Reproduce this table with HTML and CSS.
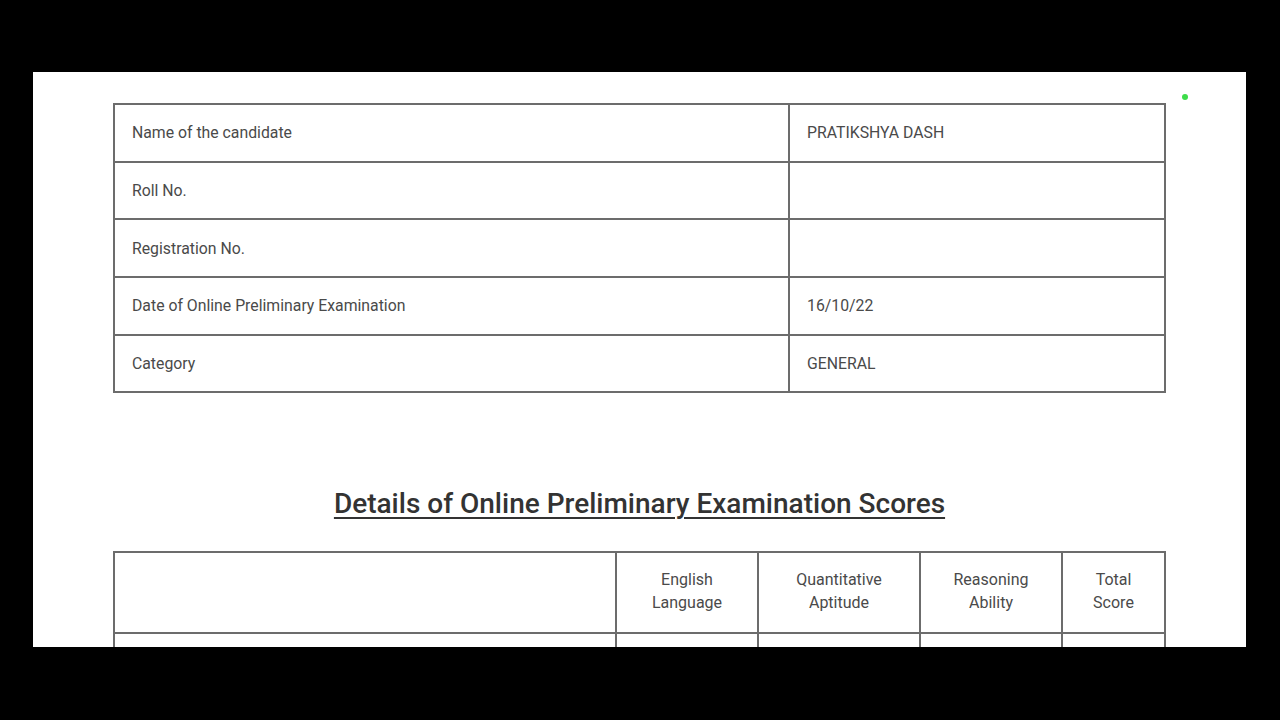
FILE: index.html
```html
<!DOCTYPE html>
<html>
<head>
<meta charset="utf-8">
<link rel="stylesheet" href="styles.css">
</head>
<body>
<div class="screen">
  <span class="dot"></span>
  <table class="info">
    <tr><td class="label">Name of the candidate</td><td class="value">PRATIKSHYA DASH</td></tr>
    <tr><td class="label">Roll No.</td><td class="value"></td></tr>
    <tr><td class="label">Registration No.</td><td class="value"></td></tr>
    <tr><td class="label">Date of Online Preliminary Examination</td><td class="value">16/10/22</td></tr>
    <tr><td class="label">Category</td><td class="value">GENERAL</td></tr>
  </table>
  <h2 class="title">Details of Online Preliminary Examination Scores</h2>
  <table class="scores">
    <tr class="head">
      <th class="c1"></th>
      <th class="c2">English<br>Language</th>
      <th class="c3">Quantitative<br>Aptitude</th>
      <th class="c4">Reasoning<br>Ability</th>
      <th class="c5">Total<br>Score</th>
    </tr>
    <tr class="body-row"><td></td><td></td><td></td><td></td><td></td></tr>
  </table>
</div>
</body>
</html>
```
FILE: styles.css
```css
html, body {
  margin: 0;
  padding: 0;
  background: #000;
  height: 720px;
  overflow: hidden;
}
.screen {
  position: relative;
  margin: 72px 0 0 33px;
  width: 1213px;
  height: 575px;
  background: #fff;
  overflow: hidden;
  padding: 31px 0 0 80px;
  box-sizing: border-box;
  font-family: Roboto, "Liberation Sans", sans-serif;
  color: #4a4a4a;
}
.dot {
  position: absolute;
  left: 1149px;
  top: 22px;
  width: 6px;
  height: 6px;
  border-radius: 50%;
  background: #3ddc4a;
}
table {
  border-collapse: collapse;
}
.info {
  width: 1053px;
}
.info td {
  border: 2.5px solid #6c6c6c;
  height: 55.7px;
  padding: 0 0 0 17px;
  font-size: 15.8px;
  vertical-align: middle;
}
.info .label {
  width: 656px;
}
.title {
  margin: 97px 0 0 0;
  width: 1053px;
  text-align: center;
  font-size: 28px;
  font-weight: 500;
  color: #333;
  text-decoration: underline;
  text-decoration-thickness: 2px;
  text-underline-offset: 4px;
  line-height: 28px;
}
.scores {
  margin-top: 33px;
  width: 1053px;
  table-layout: fixed;
}
.scores th, .scores td {
  border: 2.5px solid #6c6c6c;
  font-size: 16px;
  font-weight: 400;
  line-height: 23px;
  text-align: center;
  vertical-align: middle;
  padding: 0;
}
.scores .head th {
  height: 75px;
  padding-bottom: 4px;
}
.scores .body-row td {
  height: 50px;
}
.c1 { width: 500px; }
.c2 { width: 140px; }
.c3 { width: 160px; }
.c4 { width: 140px; }
.c5 { width: 101px; }
```
